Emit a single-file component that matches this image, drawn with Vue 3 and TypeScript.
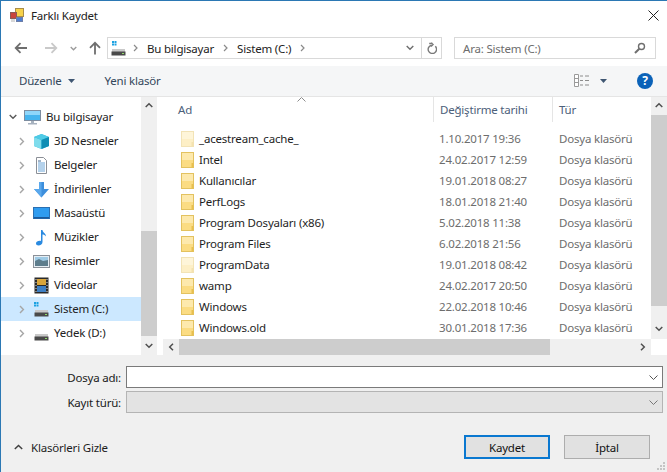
<script setup lang="ts">
interface NavItem { label: string; icon: string; selected?: boolean }
interface FileItem { name: string; date: string; faded?: boolean }

const navItems: NavItem[] = [
  { label: '3D Nesneler', icon: 'cube' },
  { label: 'Belgeler', icon: 'doc' },
  { label: 'İndirilenler', icon: 'down' },
  { label: 'Masaüstü', icon: 'desk' },
  { label: 'Müzikler', icon: 'music' },
  { label: 'Resimler', icon: 'pic' },
  { label: 'Videolar', icon: 'video' },
  { label: 'Sistem (C:)', icon: 'sys', selected: true },
  { label: 'Yedek (D:)', icon: 'drive' },
]

const files: FileItem[] = [
  { name: '_acestream_cache_', date: '1.10.2017 19:36', faded: true },
  { name: 'Intel', date: '24.02.2017 12:59' },
  { name: 'Kullanıcılar', date: '19.01.2018 08:27' },
  { name: 'PerfLogs', date: '18.01.2018 21:40' },
  { name: 'Program Dosyaları (x86)', date: '5.02.2018 11:38' },
  { name: 'Program Files', date: '6.02.2018 21:56' },
  { name: 'ProgramData', date: '19.01.2018 08:42', faded: true },
  { name: 'wamp', date: '24.02.2017 20:50' },
  { name: 'Windows', date: '22.02.2018 10:46' },
  { name: 'Windows.old', date: '30.01.2018 17:36' },
]
</script>

<template>
  <div class="win">
    <header class="title">
      <svg class="appicon" width="15" height="15" viewBox="0 0 15 15">
        <rect x="5.500" y="0.500" width="8" height="8" fill="#f7d24a" stroke="#a98d4a" />
        <rect x="0.500" y="4.500" width="6" height="6" fill="#c9443c" stroke="#8c5a55" />
        <rect x="6.500" y="9.500" width="6" height="4" fill="#4f7fd0" stroke="#6d7ea8" />
        <rect x="1" y="11" width="4" height="3" fill="#d8d8d8" />
      </svg>
      <span class="title-text">Farklı Kaydet</span>
      <svg class="close" width="11" height="11" viewBox="0 0 11 11">
        <path d="M.5.5l10 10M10.500.5l-10 10" stroke="#222" stroke-width="1" fill="none" />
      </svg>
    </header>

    <div class="navbar">
      <svg class="nb back" width="14" height="12" viewBox="0 0 14 12"><path d="M13 6H2M6.500 1.200L1.700 6l4.800 4.800" stroke="#6e6e6e" stroke-width="1.800" fill="none" /></svg>
      <svg class="nb fwd" width="14" height="12" viewBox="0 0 14 12"><path d="M1 6h11M7.500 1.200L12.300 6l-4.800 4.800" stroke="#c9c9c9" stroke-width="1.800" fill="none" /></svg>
      <svg class="nb hist" width="7" height="5" viewBox="0 0 7 5"><path d="M.7 1l2.800 2.800L6.300 1" stroke="#9a9a9a" stroke-width="1.300" fill="none" /></svg>
      <svg class="nb up" width="12" height="14" viewBox="0 0 12 14"><path d="M6 13.500V2M1 6.800l5-5 5 5" stroke="#6e6e6e" stroke-width="1.800" fill="none" /></svg>

      <div class="address">
        <svg class="addr-icon" width="15" height="15" viewBox="0 0 15 15">
          <path d="M1 0h2v2H1zM3.500 0h2v2h-2zM1 2.500h2v2H1zM3.500 2.500h2v2h-2z" fill="#1ba1e2" />
          <rect x="1" y="8" width="13" height="3" fill="#c9c9c9" />
          <rect x="0.500" y="10.500" width="14" height="4" fill="#4a4a4a" />
          <rect x="11" y="12" width="2" height="1" fill="#8fdc6a" />
        </svg>
        <svg class="crumb first" width="5" height="8" viewBox="0 0 5 8"><path d="M1 1l3 3-3 3" stroke="#8a8a8a" stroke-width="1.200" fill="none" /></svg>
        <span>Bu bilgisayar</span>
        <svg class="crumb" width="5" height="8" viewBox="0 0 5 8"><path d="M1 1l3 3-3 3" stroke="#8a8a8a" stroke-width="1.200" fill="none" /></svg>
        <span>Sistem (C:)</span>
        <svg class="crumb" width="5" height="8" viewBox="0 0 5 8"><path d="M1 1l3 3-3 3" stroke="#8a8a8a" stroke-width="1.200" fill="none" /></svg>
        <span class="spacer"></span>
        <svg class="addr-drop" width="8" height="6" viewBox="0 0 8 6"><path d="M.7 1l3.300 3.300L7.300 1" stroke="#6e6e6e" stroke-width="1.400" fill="none" /></svg>
        <div class="refresh">
          <svg width="11" height="12" viewBox="0 0 11 12"><path d="M3.200 1.500h3.500M9.300 4.300A4.200 4.200 0 1 1 5.500 3.200M5 0.800l2 1.800-2 1.800" stroke="#7a7a7a" stroke-width="1.400" fill="none" /></svg>
        </div>
      </div>

      <div class="search">
        <span>Ara: Sistem (C:)</span>
        <svg width="12" height="12" viewBox="0 0 12 12"><circle cx="7.500" cy="4.500" r="3" stroke="#6f6f6f" stroke-width="1.400" fill="none" /><path d="M5.300 6.700L1 11" stroke="#6f6f6f" stroke-width="2" /></svg>
      </div>
    </div>

    <div class="toolbar">
      <span class="tool">Düzenle</span>
      <svg class="caret" width="7" height="4" viewBox="0 0 7 4"><path d="M0 0h7L3.500 4z" fill="#3f5672" /></svg>
      <span class="tool new">Yeni klasör</span>
      <span class="spacer"></span>
      <svg class="views" width="16" height="13" viewBox="0 0 16 13">
        <path d="M.500.500h4v12h-4zM.500 4.500h4M.500 8.500h4" stroke="#9a9a9a" fill="#fff" />
        <path d="M6 2h3M6 6.500h3M6 11h3M11 2h4M11 6.500h4M11 11h4" stroke="#8c8c8c" fill="none" />
      </svg>
      <svg class="caret viewcaret" width="7" height="4" viewBox="0 0 7 4"><path d="M0 0h7L3.500 4z" fill="#3f5672" /></svg>
      <div class="help">?</div>
    </div>

    <main class="content">
      <nav class="tree">
        <div class="tree-row root">
          <svg class="tw" width="8" height="6" viewBox="0 0 8 6"><path d="M.7 1l3.300 3.300L7.300 1" stroke="#5a5a5a" stroke-width="1.400" fill="none" /></svg>
          <svg class="ti" width="17" height="15" viewBox="0 0 17 15">
            <rect x="0.500" y="0.500" width="16" height="10" fill="#46b4ee" stroke="#7d8da0" />
            <rect x="1" y="1" width="15" height="4" fill="#8fd6fa" />
            <path d="M7 11h3v2H7zM4 13h9v1.500H4z" fill="#a7b2bf" />
          </svg>
          <span>Bu bilgisayar</span>
        </div>
        <div v-for="it in navItems" :key="it.label" class="tree-row child" :class="{ selected: it.selected }">
          <svg class="tw tw-r" width="6" height="9" viewBox="0 0 6 9"><path d="M1 1l3.400 3.500L1 8" stroke="#a6a6a6" stroke-width="1.400" fill="none" /></svg>
          <svg class="ti" width="17" height="17" viewBox="0 0 17 17">
            <template v-if="it.icon === 'cube'">
              <path d="M8.500 1L16 4v9l-7.500 3L1 13V4z" fill="#2bb5d8" />
              <path d="M1 4l7.500 3v9L1 13z" fill="#7fdcec" />
              <path d="M8.500 1L16 4 8.500 7 1 4z" fill="#4fcbe6" />
              <path d="M16 4v9l-7.500 3V7z" fill="#0f8db4" />
            </template>
            <template v-else-if="it.icon === 'doc'">
              <path d="M3.500.500h7l3 3v13h-10z" fill="#fff" stroke="#8b8f96" />
              <path d="M5 6h7M5 8h7M5 10h7M5 12h7M5 14h7" stroke="#6aa5d8" />
              <path d="M5 4h3" stroke="#456b92" />
            </template>
            <template v-else-if="it.icon === 'down'">
              <path d="M6 1h5v7h5l-7.500 8.500L1 8h5z" fill="#3d8fdc" />
              <path d="M6 1h2.500v15.500L1 8h5z" fill="#5aa8ec" />
            </template>
            <template v-else-if="it.icon === 'desk'">
              <rect x="0.500" y="2.500" width="16" height="11" fill="#2f9cf0" stroke="#2a6fb2" />
              <rect x="1" y="12" width="15" height="1.500" fill="#1a5a9c" />
            </template>
            <template v-else-if="it.icon === 'music'">
              <path d="M8 1h1.500c.3 3 3.500 3 3.500 6.500-1-1.500-2.500-2-3.500-2V13c0 2-2 3.500-4 3.500-1.500 0-2.500-1-2.500-2 0-2 2.500-3 5-2.500z" fill="#2a8ae0" />
            </template>
            <template v-else-if="it.icon === 'pic'">
              <rect x="0.500" y="2.500" width="16" height="12" fill="#e6eef4" stroke="#8a9098" />
              <rect x="2" y="4" width="13" height="4" fill="#9fcbe6" />
              <path d="M2 8l4-2 4 2 5-1v6H2z" fill="#5d7d8c" />
            </template>
            <template v-else-if="it.icon === 'video'">
              <rect x="1.500" y="0.500" width="14" height="16" fill="#2a2a2a" />
              <rect x="4" y="2" width="9" height="6" fill="#d9a53a" />
              <rect x="4" y="9" width="9" height="6" fill="#3d7fc4" />
              <path d="M2.500 2h1v1h-1zM2.500 5h1v1h-1zM2.500 8h1v1h-1zM2.500 11h1v1h-1zM2.500 14h1v1h-1zM13.500 2h1v1h-1zM13.500 5h1v1h-1zM13.500 8h1v1h-1zM13.500 11h1v1h-1zM13.500 14h1v1h-1z" fill="#ddd" />
            </template>
            <template v-else>
              <path v-if="it.icon === 'sys'" d="M1 1h2v2H1zM3.500 1h2v2h-2zM1 3.500h2v2H1zM3.500 3.500h2v2h-2z" fill="#1ba1e2" />
              <rect x="2" y="9" width="13" height="3" fill="#c9c9c9" />
              <rect x="1.500" y="11.500" width="14" height="4" fill="#4a4a4a" />
              <rect x="12" y="13" width="2" height="1" fill="#8fdc6a" />
            </template>
          </svg>
          <span>{{ it.label }}</span>
        </div>
      </nav>

      <div class="vscroll left-scroll">
        <svg class="arrow" width="8" height="6" viewBox="0 0 8 6"><path d="M.7 5L4 1.700 7.300 5" stroke="#505050" stroke-width="1.500" fill="none" /></svg>
        <div class="thumb"></div>
        <svg class="arrow" width="8" height="6" viewBox="0 0 8 6"><path d="M.7 1L4 4.300 7.300 1" stroke="#505050" stroke-width="1.500" fill="none" /></svg>
      </div>

      <section class="files">
        <div class="files-main">
          <div class="list">
            <div class="cols">
              <div class="col c-name">Ad</div>
              <div class="col c-date">Değiştirme tarihi</div>
              <div class="col c-type">Tür</div>
              <svg class="sortcaret" width="9" height="5" viewBox="0 0 9 5"><path d="M.500 4.500l4-4 4 4" stroke="#8c8c8c" fill="none" /></svg>
            </div>
            <div v-for="f in files" :key="f.name" class="frow">
              <div class="c-name fname">
                <svg class="folder" :class="{ faded: f.faded }" width="13" height="16" viewBox="0 0 13 16">
                  <rect x="0.500" y="0.500" width="12" height="15" fill="#fbdc83" stroke="#e3c260" />
                  <path d="M1 1h11v7H1z" fill="#fde9ad" />
                  <rect x="10.500" y="11" width="2" height="4.500" fill="#e8bf4f" />
                </svg>
                <span>{{ f.name }}</span>
              </div>
              <div class="c-date meta">{{ f.date }}</div>
              <div class="c-type meta">Dosya klasörü</div>
            </div>
          </div>
          <div class="vscroll right-scroll">
            <svg class="arrow" width="8" height="6" viewBox="0 0 8 6"><path d="M.7 5L4 1.700 7.300 5" stroke="#505050" stroke-width="1.500" fill="none" /></svg>
            <div class="thumb"></div>
            <svg class="arrow" width="8" height="6" viewBox="0 0 8 6"><path d="M.7 1L4 4.300 7.300 1" stroke="#505050" stroke-width="1.500" fill="none" /></svg>
          </div>
        </div>
        <div class="hscroll">
          <div class="htrack">
            <svg class="harrow" width="6" height="8" viewBox="0 0 6 8"><path d="M5 .7L1.700 4 5 7.300" stroke="#505050" stroke-width="1.500" fill="none" /></svg>
            <div class="hthumb"></div>
            <span class="spacer"></span>
            <svg class="harrow" width="6" height="8" viewBox="0 0 6 8"><path d="M1 .7L4.300 4 1 7.300" stroke="#505050" stroke-width="1.500" fill="none" /></svg>
          </div>
          <div class="corner"></div>
        </div>
      </section>
    </main>

    <footer class="bottom">
      <div class="field first-field">
        <label>Dosya adı:</label>
        <div class="combo active">
          <svg width="9" height="5" viewBox="0 0 9 5"><path d="M.500.500l4 4 4-4" stroke="#555" fill="none" /></svg>
        </div>
      </div>
      <div class="field second-field">
        <label>Kayıt türü:</label>
        <div class="combo disabled">
          <svg width="9" height="5" viewBox="0 0 9 5"><path d="M.500.500l4 4 4-4" stroke="#777" fill="none" /></svg>
        </div>
      </div>
      <div class="actions">
        <div class="hide">
          <svg width="9" height="6" viewBox="0 0 9 6"><path d="M.800 5L4.500 1.500 8.200 5" stroke="#404040" stroke-width="1.500" fill="none" /></svg>
          <span>Klasörleri Gizle</span>
        </div>
        <span class="spacer"></span>
        <button class="btn primary">Kaydet</button>
        <button class="btn">İptal</button>
      </div>
      <svg class="grip" width="10" height="10" viewBox="0 0 10 10"><path d="M7 1h2v2H7zM4 4h2v2H4zM7 4h2v2H7zM1 7h2v2H1zM4 7h2v2H4zM7 7h2v2H7z" fill="#c4c4c4" /></svg>
    </footer>
  </div>
</template>

<style scoped>
* { box-sizing: border-box; }
.win {
  position: relative;
  width: 667px;
  height: 472px;
  overflow: hidden;
  background: #fff;
  border-top: 1px solid #2b78b4;
  border-left: 1px solid #2b78b4;
  font-family: "Noto Sans", "Open Sans", sans-serif;
  font-size: 11.5px;
  letter-spacing: -0.2px;
  color: #1e1e1e;
  display: flex;
  flex-direction: column;
}
.spacer { flex: 1; }
.title {
  height: 29px;
  display: flex;
  align-items: center;
  padding-left: 9px;
  flex: none;
}
.title-text { margin-left: 6px; color: #222; }
.close { margin-left: auto; margin-right: 8px; }
.navbar {
  height: 36px;
  flex: none;
  display: flex;
  align-items: center;
  position: relative;
}
.nb { flex: none; }
.back { margin-left: 13px; }
.fwd { margin-left: 16px; }
.hist { margin-left: 12px; }
.up { margin-left: 12px; }
.address {
  margin-left: 6px;
  width: 335px;
  height: 22px;
  border: 1px solid #d9d9d9;
  display: flex;
  align-items: center;
  padding-left: 3px;
  color: #222;
}
.addr-icon { flex: none; }
.crumb { flex: none; margin: 0 9px; }
.crumb.first { margin-left: 7px; margin-right: 9px; }
.addr-drop { margin-right: 7px; }
.refresh {
  width: 20px;
  height: 20px;
  border-left: 1px solid #d9d9d9;
  display: flex;
  align-items: center;
  justify-content: center;
}
.search {
  margin-left: 12px;
  width: 202px;
  height: 22px;
  border: 1px solid #d9d9d9;
  display: flex;
  align-items: center;
  justify-content: space-between;
  padding: 0 9px 0 8px;
  color: #6d6d6d;
}
.toolbar {
  height: 31px;
  flex: none;
  background: #f5f6f7;
  border-bottom: 1px solid #e5e5e5;
  display: flex;
  align-items: center;
  padding-left: 18px;
  padding-bottom: 1px;
  color: #1e3d5c;
}
.tool { color: #33475b; }
.caret { margin-left: 6px; flex: none; }
.new { margin-left: 30px; }
.views { flex: none; }
.viewcaret { margin-left: 10px; }
.help {
  width: 16px;
  height: 16px;
  margin: 0 14px 0 30px;
  border-radius: 50%;
  background: #0b62b8;
  color: #fff;
  font-weight: 700;
  font-size: 12px;
  line-height: 16px;
  text-align: center;
}
.content {
  height: 258px;
  flex: none;
  display: flex;
}
.tree {
  width: 140px;
  flex: none;
  padding-top: 8px;
  color: #222;
}
.tree-row {
  height: 24px;
  display: flex;
  align-items: center;
  white-space: nowrap;
}
.tree-row span { margin-left: 5px; padding-bottom: 2px; }
.root { padding-left: 8px; }
.root .tw { flex: none; margin-right: 7px; }
.child { padding-left: 18px; }
.child .tw { flex: none; margin-right: 8px; }
.child span { margin-left: 4px; }
.selected { background: #cce8ff; }
.ti { flex: none; }
.vscroll {
  width: 16px;
  flex: none;
  background: #f0f0f0;
  display: flex;
  flex-direction: column;
  align-items: center;
}
.arrow { flex: none; }
.left-scroll .arrow:first-child { margin-top: 5px; }
.left-scroll .thumb { margin-top: 123px; height: 105px; }
.left-scroll .arrow:last-child { margin-top: 7px; }
.thumb { width: 100%; background: #cdcdcd; }
.files {
  flex: 1;
  min-width: 0;
  margin-left: 6px;
  display: flex;
  flex-direction: column;
}
.files-main { flex: 1; min-height: 0; display: flex; }
.list { flex: 1; min-width: 0; }
.cols {
  position: relative;
  height: 25px;
  margin-bottom: 6px;
  display: flex;
  color: #4c607a;
}
.col { height: 25px; line-height: 25px; padding-left: 6px; }
.col.c-name { padding-left: 15px; }
.col.c-type { border-left: 1px solid #e5e5e5; }
.col.c-date { border-left: 1px solid #e5e5e5; }
.c-name { width: 270px; flex: none; }
.c-date { width: 119px; flex: none; }
.c-type { flex: 1; min-width: 0; white-space: nowrap; overflow: hidden; }
.sortcaret { position: absolute; left: 134px; top: 0; }
.frow { height: 21px; display: flex; align-items: center; }
.fname { display: flex; align-items: center; padding-left: 18px; }
.fname span { margin-left: 5px; }
.meta { color: #6d6d6d; padding-left: 6px; }
.meta.c-type { padding-left: 7px; }
.folder { flex: none; }
.folder.faded { opacity: .45; }
.right-scroll .arrow:first-child { margin-top: 5px; }
.right-scroll .thumb { margin-top: 7px; height: 191px; }
.right-scroll .arrow:last-child { margin-top: 20px; }
.hscroll { height: 16px; flex: none; display: flex; }
.htrack {
  flex: 1;
  background: #f0f0f0;
  display: flex;
  align-items: center;
  padding-right: 5px;
}
.harrow { flex: none; margin-left: 5px; }
.hthumb { width: 371px; height: 16px; margin-left: 5px; background: #cdcdcd; }
.corner { width: 16px; background: #fff; }
.bottom {
  flex: 1;
  background: #f0f0f0;
  position: relative;
  padding-top: 11px;
}
.field { height: 22px; display: flex; align-items: center; }
.second-field { margin-top: 3px; }
.field label { width: 120px; flex: none; text-align: right; color: #1a1a1a; }
.combo {
  margin-left: 5px;
  width: 537px;
  height: 22px;
  display: flex;
  align-items: center;
  justify-content: flex-end;
  padding-right: 4px;
}
.active { background: #fff; border: 1px solid #7a7a7a; }
.disabled { background: #e3e3e3; border: 1px solid #b4b4b4; }
.actions {
  display: flex;
  align-items: center;
  margin-top: 22px;
  height: 24px;
  padding-right: 17px;
}
.hide {
  display: flex;
  align-items: center;
  gap: 8px;
  padding-left: 13px;
  color: #1e1e1e;
}
.btn {
  width: 86px;
  height: 24px;
  font: inherit;
  letter-spacing: inherit;
  color: #111;
  background: #e1e1e1;
  border: 1px solid #adadad;
  padding: 0;
}
.primary { border: 2px solid #0a78d0; margin-right: 14px; }
.grip { position: absolute; right: 1px; bottom: 1px; }
</style>
